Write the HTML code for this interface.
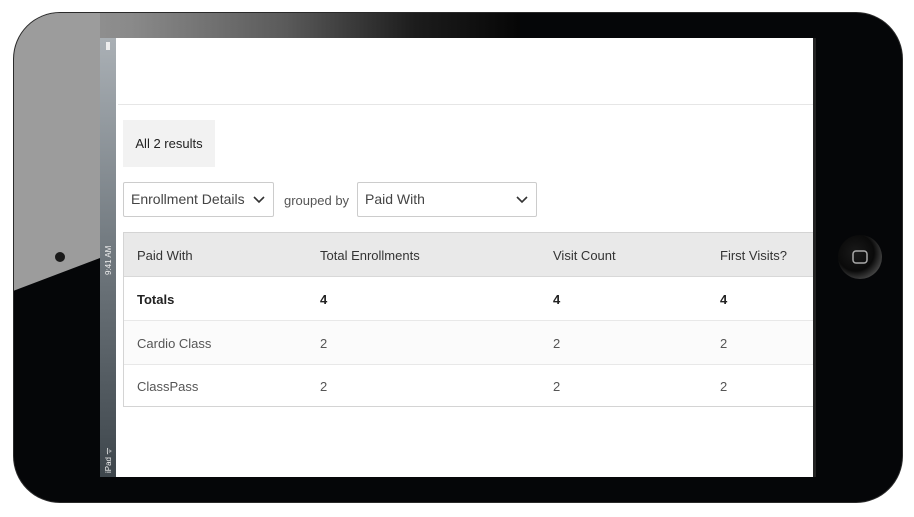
<!DOCTYPE html>
<html><head><style>
body{margin:0;width:914px;height:517px;background:#fff;position:relative;overflow:hidden;font-family:"Liberation Sans",sans-serif;}
.abs{position:absolute}
.t{font-size:13px;color:#333}
</style></head><body>
<svg class="abs" style="left:0;top:0" width="914" height="517">
<defs>
<linearGradient id="g1" x1="0" y1="0" x2="1" y2="0"><stop offset="0" stop-color="#9c9c9c"/><stop offset="0.25" stop-color="#8a8a8a"/><stop offset="0.55" stop-color="#5a5a5a"/><stop offset="0.8" stop-color="#1c1c1c"/><stop offset="1" stop-color="#060606"/></linearGradient>
<linearGradient id="sb" x1="0" y1="0" x2="0" y2="1"><stop offset="0" stop-color="#aab0b5"/><stop offset="0.5" stop-color="#6f777d"/><stop offset="1" stop-color="#3e464c"/></linearGradient>
<radialGradient id="hb" cx="0.4" cy="0.4" r="0.7"><stop offset="0" stop-color="#1a1a1a"/><stop offset="0.6" stop-color="#0a0a0a"/><stop offset="1" stop-color="#555"/></radialGradient>
<clipPath id="dev"><rect x="14" y="13" width="888" height="489" rx="46"/></clipPath>
</defs>
<rect x="13" y="12" width="890" height="491" rx="47" fill="#2a2a2a"/>
<g clip-path="url(#dev)">
<rect x="14" y="13" width="888" height="489" fill="#050608"/>
<rect x="0" y="0" width="520" height="38" fill="url(#g1)"/>
<polygon points="0,0 100,0 100,258 0,296" fill="#9c9c9c"/>
</g>
<rect x="100" y="38" width="16" height="439" fill="url(#sb)"/>
<rect x="116" y="38" width="700" height="439" fill="#fff"/>
<rect x="813" y="38" width="3" height="439" fill="#222"/>
<rect x="106" y="42" width="4" height="8" fill="#eee"/>
<circle cx="60" cy="257" r="5" fill="#1a1a1a"/>
<circle cx="860" cy="257" r="22" fill="url(#hb)"/>
<rect x="853" y="251" width="14" height="12" rx="3" fill="none" stroke="#aaa" stroke-width="1.5"/>
<text x="0" y="0" transform="translate(111,275) rotate(-90)" font-size="8" fill="#eee" font-family="Liberation Sans">9:41 AM</text>
<text x="0" y="0" transform="translate(111,473) rotate(-90)" font-size="8" fill="#eee" font-family="Liberation Sans">iPad ᯤ</text>
</svg>
<div class="abs" style="left:118px;top:104px;width:695px;height:1px;background:#e6e6e6"></div>
<div class="abs t" style="left:123px;top:120px;width:92px;height:47px;background:#f2f2f2;line-height:47px;text-align:center;color:#222">All 2 results</div>
<div class="abs t" style="left:123px;top:182px;width:149px;height:33px;border:1px solid #ccc;border-radius:2px;line-height:33px;box-sizing:content-box;font-size:14px;color:#444"><span style="margin-left:7px">Enrollment Details</span>
<svg class="abs" style="right:8px;top:13px" width="12" height="8"><path d="M1 1L6 6L11 1" fill="none" stroke="#333" stroke-width="1.6"/></svg></div>
<div class="abs t" style="left:284px;top:193px;color:#555">grouped by</div>
<div class="abs t" style="left:357px;top:182px;width:178px;height:33px;border:1px solid #ccc;border-radius:2px;line-height:33px;font-size:14px;color:#444"><span style="margin-left:7px">Paid With</span>
<svg class="abs" style="right:8px;top:13px" width="12" height="8"><path d="M1 1L6 6L11 1" fill="none" stroke="#333" stroke-width="1.6"/></svg></div>
<div class="abs" style="left:123px;top:232px;width:690px;height:175px;border:1px solid #d4d4d4;border-right:none;box-sizing:border-box"></div>
<div class="abs" style="left:124px;top:233px;width:689px;height:43px;background:#e9e9e9;border-bottom:1px solid #d8d8d8"></div>
<div class="abs" style="left:124px;top:320px;width:689px;height:1px;background:#e8e8e8"></div>
<div class="abs" style="left:124px;top:321px;width:689px;height:43px;background:#fbfbfb"></div>
<div class="abs" style="left:124px;top:364px;width:689px;height:1px;background:#e8e8e8"></div>
<div class="abs t" style="left:137px;top:248px">Paid With</div>
<div class="abs t" style="left:320px;top:248px">Total Enrollments</div>
<div class="abs t" style="left:553px;top:248px">Visit Count</div>
<div class="abs t" style="left:720px;top:248px">First Visits?</div>
<div class="abs t" style="left:137px;top:292px;font-weight:bold;color:#222">Totals</div>
<div class="abs t" style="left:320px;top:292px;font-weight:bold;color:#222">4</div>
<div class="abs t" style="left:553px;top:292px;font-weight:bold;color:#222">4</div>
<div class="abs t" style="left:720px;top:292px;font-weight:bold;color:#222">4</div>
<div class="abs t" style="left:137px;top:336px;color:#555">Cardio Class</div>
<div class="abs t" style="left:320px;top:336px;color:#555">2</div>
<div class="abs t" style="left:553px;top:336px;color:#555">2</div>
<div class="abs t" style="left:720px;top:336px;color:#555">2</div>
<div class="abs t" style="left:137px;top:379px;color:#555">ClassPass</div>
<div class="abs t" style="left:320px;top:379px;color:#555">2</div>
<div class="abs t" style="left:553px;top:379px;color:#555">2</div>
<div class="abs t" style="left:720px;top:379px;color:#555">2</div>
</body></html>
